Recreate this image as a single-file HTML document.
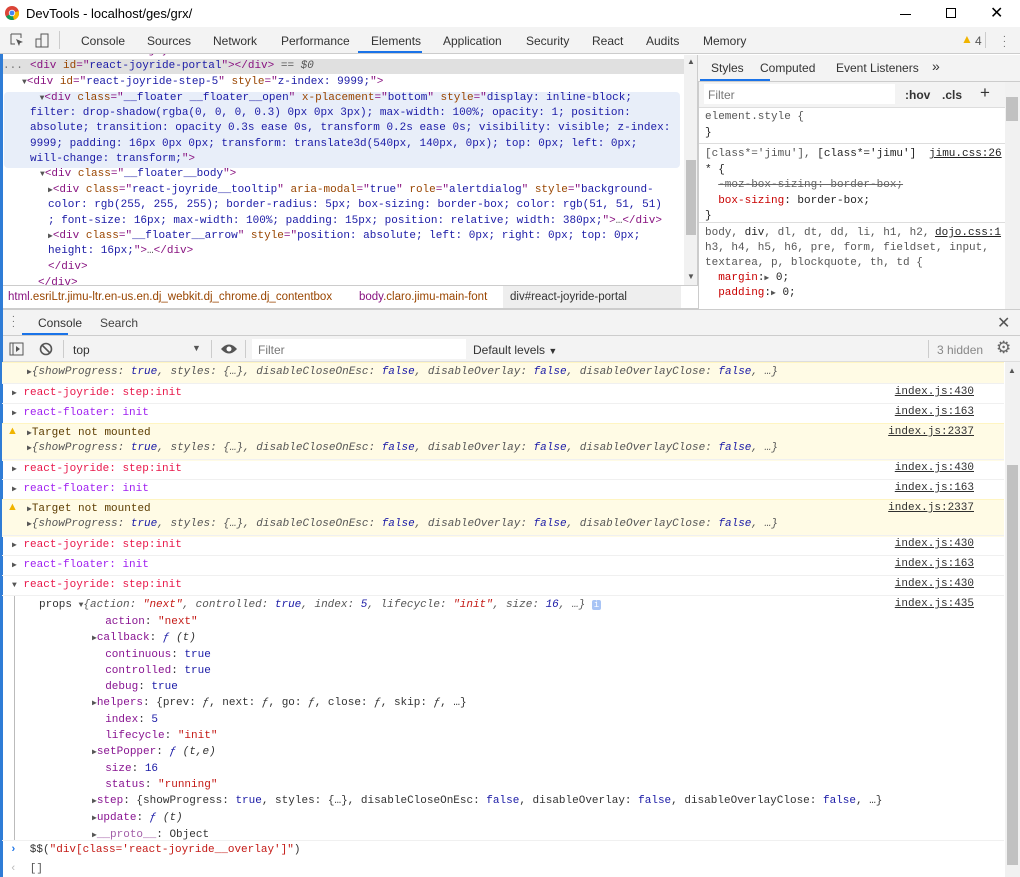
<!DOCTYPE html>
<html><head><meta charset="utf-8"><style>
*{margin:0;padding:0;box-sizing:border-box}
body{width:1020px;height:877px;overflow:hidden;background:#fff;font-family:"Liberation Sans",sans-serif;font-size:12px;color:#333;position:relative}
.abs{position:absolute}
.m{font-family:"Liberation Mono",monospace;font-size:11px;white-space:pre;position:absolute;line-height:15px}
.t{color:#881280}.a{color:#994500}.v{color:#1a1aa6}.k{color:#881391}.s{color:#c41a16}.n{color:#1a1aa6}.g{color:#565656}
.tri{font-size:8px;color:#555}
.row{position:absolute;left:2px;width:1002px;border-top:1px solid #f0f0f0;height:20px}
.warn{background:#fffbe5;border-top:1px solid #fff5c2}
.rj{color:#e8174a}.rf{color:#a020f0}
.src{position:absolute;right:46px;text-decoration:underline;color:#303030;font-family:"Liberation Mono",monospace;font-size:11px}
.it{font-style:italic}
.tab{position:absolute;top:34px;font-size:12px;color:#333}
</style></head><body>
<div class="abs" style="left:0;top:0;width:3px;height:877px;background:#2f7cd6"></div>
<!-- elements first partial line (clipped) -->
<div class="abs" style="left:3px;top:54px;width:681px;height:5px;overflow:hidden">
<div class="m" style="left:27px;top:-10px;color:#881280">&lt;div class="react-joyride"&gt;…&lt;/div&gt;</div></div>
<!-- title -->
<div class="abs" style="left:0;top:0;width:1020px;height:27px;background:#fff"></div>
<svg class="abs" style="left:5px;top:6px" width="14" height="14" viewBox="0 0 14 14"><circle cx="7" cy="7" r="7" fill="#db4437"/><path d="M7 7 L1 10.5 A7 7 0 0 0 9 13.8Z" fill="#0f9d58"/><path d="M7 7 L9 13.8 A7 7 0 0 0 13.9 5Z" fill="#f4b400"/><circle cx="7" cy="7" r="3.2" fill="#fff"/><circle cx="7" cy="7" r="2.4" fill="#4285f4"/></svg>
<div class="abs" style="left:26px;top:6px;font-size:13px;color:#000">DevTools - localhost/ges/grx/</div>
<div class="abs" style="left:900px;top:14px;width:11px;height:1px;background:#000"></div>
<div class="abs" style="left:946px;top:8px;width:10px;height:10px;border:1px solid #000"></div>
<div class="abs" style="left:990px;top:3px;font-size:16px;color:#000">✕</div>
<!-- tab bar -->
<div class="abs" style="left:0;top:27px;width:1020px;height:27px;background:#f3f3f3;border-bottom:1px solid #ccc"></div>
<svg class="abs" style="left:10px;top:33px" width="40" height="16"><path d="M1 1h10v4M1 1v10h4" stroke="#555" fill="none"/><path d="M6 6l7 3-3 1-1 3z" fill="#555"/><rect x="31" y="1" width="7" height="13" fill="none" stroke="#555"/><rect x="26" y="6" width="5" height="8" fill="none" stroke="#555"/></svg>
<div class="abs" style="left:59px;top:31px;width:1px;height:18px;background:#ccc"></div>
<div class="tab" style="left:81px">Console</div><div class="tab" style="left:147px">Sources</div><div class="tab" style="left:213px">Network</div><div class="tab" style="left:281px">Performance</div><div class="tab" style="left:371px">Elements</div><div class="tab" style="left:443px">Application</div><div class="tab" style="left:526px">Security</div><div class="tab" style="left:592px">React</div><div class="tab" style="left:646px">Audits</div><div class="tab" style="left:703px">Memory</div>
<div class="abs" style="left:358px;top:51px;width:64px;height:2px;background:#1a73e8"></div>
<div class="abs" style="left:961px;top:32px;color:#f0b400;font-size:12px">▲</div><div class="abs" style="left:975px;top:34px;color:#555">4</div>
<div class="abs" style="left:985px;top:32px;width:1px;height:16px;background:#ccc"></div>
<div class="abs" style="left:1003px;top:32px;color:#666;font-size:10px;line-height:5px">.<br>.<br>.</div>
<!-- elements -->
<div class="abs" style="left:3px;top:59px;width:681px;height:15px;background:#e0e0e0"></div>
<div class="abs" style="left:4px;top:92px;width:676px;height:76px;background:#e8eef9;border-radius:4px"></div>
<div class="m" style="left:3px;top:59px;color:#777">...</div>
<div class="m" style="left:30px;top:59px"><span class="t">&lt;div</span> <span class="a">id</span><span class="t">="</span><span class="v">react-joyride-portal</span><span class="t">"&gt;&lt;/div&gt;</span><span class="g"> == </span><span class="g it">$0</span></div>
<div class="m" style="left:22px;top:75px"><span class="tri">▼</span><span class="t">&lt;div</span> <span class="a">id</span><span class="t">="</span><span class="v">react-joyride-step-5</span><span class="t">"</span> <span class="a">style</span><span class="t">="</span><span class="v">z-index: 9999;</span><span class="t">"&gt;</span></div>
<div class="m v" style="left:30px;top:91px;line-height:15.2px"><span class="tri">  ▼</span><span class="t">&lt;div</span> <span class="a">class</span><span class="t">="</span>__floater __floater__open<span class="t">"</span> <span class="a">x-placement</span><span class="t">="</span>bottom<span class="t">"</span> <span class="a">style</span><span class="t">="</span>display: inline-block;
filter: drop-shadow(rgba(0, 0, 0, 0.3) 0px 0px 3px); max-width: 100%; opacity: 1; position:
absolute; transition: opacity 0.3s ease 0s, transform 0.2s ease 0s; visibility: visible; z-index:
9999; padding: 16px 0px 0px; transform: translate3d(540px, 140px, 0px); top: 0px; left: 0px;
will-change: transform;<span class="t">"&gt;</span></div>
<div class="m" style="left:40px;top:167px"><span class="tri">▼</span><span class="t">&lt;div</span> <span class="a">class</span><span class="t">="</span><span class="v">__floater__body</span><span class="t">"&gt;</span></div>
<div class="m v" style="left:48px;top:183px;line-height:15.3px"><span class="tri">▶</span><span class="t">&lt;div</span> <span class="a">class</span><span class="t">="</span>react-joyride__tooltip<span class="t">"</span> <span class="a">aria-modal</span><span class="t">="</span>true<span class="t">"</span> <span class="a">role</span><span class="t">="</span>alertdialog<span class="t">"</span> <span class="a">style</span><span class="t">="</span>background-
color: rgb(255, 255, 255); border-radius: 5px; box-sizing: border-box; color: rgb(51, 51, 51)
; font-size: 16px; max-width: 100%; padding: 15px; position: relative; width: 380px;<span class="t">"&gt;</span><span class="g">…</span><span class="t">&lt;/div&gt;</span>
<span class="tri">▶</span><span class="t">&lt;div</span> <span class="a">class</span><span class="t">="</span>__floater__arrow<span class="t">"</span> <span class="a">style</span><span class="t">="</span>position: absolute; left: 0px; right: 0px; top: 0px;
height: 16px;<span class="t">"&gt;</span><span class="g">…</span><span class="t">&lt;/div&gt;</span></div>
<div class="m t" style="left:48px;top:260px">&lt;/div&gt;</div>
<div class="m t" style="left:38px;top:276px">&lt;/div&gt;</div>
<div class="abs" style="left:684px;top:55px;width:14px;height:231px;background:#f1f1f1;border-right:1px solid #ccc"></div>
<div class="abs" style="left:686px;top:160px;width:10px;height:75px;background:#c1c1c1"></div>
<div class="abs" style="left:687px;top:57px;font-size:8px;color:#555">▲</div><div class="abs" style="left:687px;top:272px;font-size:8px;color:#555">▼</div>
<!-- breadcrumb -->
<div class="abs" style="left:3px;top:285px;width:695px;height:24px;background:#fff;border-top:1px solid #ccc;border-bottom:1px solid #ccc"></div>
<div class="abs" style="left:8px;top:291px;color:#994500;font-size:11.5px"><span style="color:#881280">html</span>.esriLtr.jimu-ltr.en-us.en.dj_webkit.dj_chrome.dj_contentbox</div>
<div class="abs" style="left:359px;top:291px;color:#994500;font-size:11.5px"><span style="color:#881280">body</span>.claro.jimu-main-font</div>
<div class="abs" style="left:503px;top:286px;width:178px;height:22px;background:#eee"></div>
<div class="abs" style="left:510px;top:291px;color:#333;font-size:11.5px">div#react-joyride-portal</div>
<!-- styles pane -->
<div class="abs" style="left:698px;top:55px;width:322px;height:254px;background:#fff;border-left:1px solid #ccc"></div>
<div class="abs" style="left:698px;top:55px;width:322px;height:27px;background:#f3f3f3;border-bottom:1px solid #ccc"></div>
<div class="abs" style="left:711px;top:61px">Styles</div><div class="abs" style="left:760px;top:61px">Computed</div><div class="abs" style="left:836px;top:61px">Event Listeners</div><div class="abs" style="left:932px;top:58px;font-size:14px">»</div>
<div class="abs" style="left:700px;top:79px;width:70px;height:2px;background:#1a73e8"></div>
<div class="abs" style="left:699px;top:82px;width:306px;height:26px;background:#f3f3f3;border-bottom:1px solid #ddd"></div>
<div class="abs" style="left:704px;top:84px;width:191px;height:20px;background:#fff"></div>
<div class="abs" style="left:708px;top:88px;color:#777">Filter</div>
<div class="abs" style="left:905px;top:88px;font-weight:bold;color:#333">:hov</div><div class="abs" style="left:942px;top:88px;font-weight:bold;color:#333">.cls</div><div class="abs" style="left:980px;top:83px;font-size:17px">+</div>
<div class="m g" style="left:705px;top:110px;line-height:15.5px">element.style {
<span style="color:#222">}</span></div>
<div class="abs" style="left:699px;top:143px;width:306px;height:1px;background:#ddd"></div>
<div class="m g" style="left:705px;top:147px;line-height:15.5px">[class*='jimu'], <span style="color:#222">[class*='jimu']</span>
<span style="color:#222">* {</span>
  <span style="text-decoration:line-through;color:#666">-moz-box-sizing: border-box;</span>
  <span style="color:#c80000">box-sizing</span><span style="color:#222">: border-box;</span>
<span style="color:#222">}</span></div>
<div class="m" style="left:929px;top:147px;text-decoration:underline;color:#222">jimu.css:26</div>
<div class="abs" style="left:699px;top:222px;width:306px;height:1px;background:#ddd"></div>
<div class="m g" style="left:705px;top:226px;line-height:15px">body, <span style="color:#222">div</span>, dl, dt, dd, li, h1, h2,
h3, h4, h5, h6, pre, form, fieldset, input,
textarea, p, blockquote, th, td {
  <span style="color:#c80000">margin</span><span style="color:#222">:<span class="tri">▶</span> 0;</span>
  <span style="color:#c80000">padding</span><span style="color:#222">:<span class="tri">▶</span> 0;</span></div>
<div class="m" style="left:935px;top:226px;text-decoration:underline;color:#222">dojo.css:1</div>
<div class="abs" style="left:1005px;top:82px;width:15px;height:227px;background:#f1f1f1"></div>
<div class="abs" style="left:1006px;top:97px;width:12px;height:24px;background:#c1c1c1"></div>
<!-- drawer tabs -->
<div class="abs" style="left:3px;top:309px;width:1017px;height:27px;background:#f3f3f3;border-top:1px solid #ccc;border-bottom:1px solid #ccc"></div>
<div class="abs" style="left:12px;top:312px;color:#666;font-size:10px;line-height:5px">.<br>.<br>.</div>
<div class="abs" style="left:38px;top:316px">Console</div><div class="abs" style="left:100px;top:316px;color:#444">Search</div>
<div class="abs" style="left:22px;top:333px;width:46px;height:2px;background:#1a73e8"></div>
<div class="abs" style="left:997px;top:313px;font-size:16px;color:#555">✕</div>
<!-- console toolbar -->
<div class="abs" style="left:3px;top:336px;width:1017px;height:26px;background:#f3f3f3;border-bottom:1px solid #ddd"></div>
<svg class="abs" style="left:9px;top:342px" width="50" height="14"><rect x="1" y="1" width="13" height="12" fill="none" stroke="#555"/><line x1="4" y1="1" x2="4" y2="13" stroke="#555"/><path d="M7 4l4 3-4 3z" fill="#555"/><circle cx="37" cy="7" r="5.5" fill="none" stroke="#555" stroke-width="1.6"/><line x1="33" y1="3" x2="41" y2="11" stroke="#555" stroke-width="1.6"/></svg>
<div class="abs" style="left:63px;top:340px;width:1px;height:18px;background:#ccc"></div>
<div class="abs" style="left:73px;top:343px">top</div><div class="abs" style="left:192px;top:343px;font-size:9px;color:#555">▼</div>
<div class="abs" style="left:211px;top:340px;width:1px;height:18px;background:#ccc"></div>
<svg class="abs" style="left:220px;top:343px" width="18" height="12"><path d="M1 6Q9 -3 17 6Q9 15 1 6Z" fill="#555"/><circle cx="9" cy="6" r="2.5" fill="#fff"/></svg>
<div class="abs" style="left:245px;top:340px;width:1px;height:18px;background:#ccc"></div>
<div class="abs" style="left:252px;top:339px;width:214px;height:20px;background:#fff"></div>
<div class="abs" style="left:258px;top:343px;color:#777">Filter</div>
<div class="abs" style="left:473px;top:343px;color:#333">Default levels <span style="font-size:9px">▼</span></div>
<div class="abs" style="left:928px;top:340px;width:1px;height:18px;background:#ccc"></div>
<div class="abs" style="left:937px;top:343px;color:#888">3 hidden</div>
<div class="abs" style="left:996px;top:338px;font-size:17px;color:#666">⚙</div>
<!-- console scrollbar -->
<div class="abs" style="left:1005px;top:362px;width:15px;height:515px;background:#f1f1f1"></div>
<div class="abs" style="left:1007px;top:465px;width:11px;height:400px;background:#c1c1c1"></div>
<div class="abs" style="left:1008px;top:366px;font-size:8px;color:#555">▲</div>
<!-- console rows -->
<div class="row warn" style="top:362px;height:21px"></div>
<div class="m it g" style="left:27px;top:365px"><span class="tri" style="font-style:normal">▶</span>{showProgress: <span class="n">true</span>, styles: {…}, disableCloseOnEsc: <span class="n">false</span>, disableOverlay: <span class="n">false</span>, disableOverlayClose: <span class="n">false</span>, …}</div>
<div class="row" style="top:383px"></div><div class="m" style="left:12px;top:386px"><span class="tri">▶</span> <span class="rj">react-joyride: step:init</span></div><div class="src" style="top:386px">index.js:430</div>
<div class="row" style="top:403px"></div><div class="m" style="left:12px;top:406px"><span class="tri">▶</span> <span class="rf">react-floater: init</span></div><div class="src" style="top:406px">index.js:163</div>
<div class="row warn" style="top:423px;height:38px"></div>
<div class="abs" style="left:7px;top:425px;color:#f0b400;font-size:11px">▲</div>
<div class="m" style="left:27px;top:426px;color:#5c3c00"><span class="tri">▶</span>Target not mounted</div><div class="src" style="top:426px">index.js:2337</div>
<div class="m it g" style="left:27px;top:441px"><span class="tri" style="font-style:normal">▶</span>{showProgress: <span class="n">true</span>, styles: {…}, disableCloseOnEsc: <span class="n">false</span>, disableOverlay: <span class="n">false</span>, disableOverlayClose: <span class="n">false</span>, …}</div>
<div class="row" style="top:459px"></div><div class="m" style="left:12px;top:462px"><span class="tri">▶</span> <span class="rj">react-joyride: step:init</span></div><div class="src" style="top:462px">index.js:430</div>
<div class="row" style="top:479px"></div><div class="m" style="left:12px;top:482px"><span class="tri">▶</span> <span class="rf">react-floater: init</span></div><div class="src" style="top:482px">index.js:163</div>
<div class="row warn" style="top:499px;height:38px"></div>
<div class="abs" style="left:7px;top:501px;color:#f0b400;font-size:11px">▲</div>
<div class="m" style="left:27px;top:502px;color:#5c3c00"><span class="tri">▶</span>Target not mounted</div><div class="src" style="top:502px">index.js:2337</div>
<div class="m it g" style="left:27px;top:517px"><span class="tri" style="font-style:normal">▶</span>{showProgress: <span class="n">true</span>, styles: {…}, disableCloseOnEsc: <span class="n">false</span>, disableOverlay: <span class="n">false</span>, disableOverlayClose: <span class="n">false</span>, …}</div>
<div class="row" style="top:535px"></div><div class="m" style="left:12px;top:538px"><span class="tri">▶</span> <span class="rj">react-joyride: step:init</span></div><div class="src" style="top:538px">index.js:430</div>
<div class="row" style="top:555px"></div><div class="m" style="left:12px;top:558px"><span class="tri">▶</span> <span class="rf">react-floater: init</span></div><div class="src" style="top:558px">index.js:163</div>
<div class="row" style="top:575px"></div><div class="m" style="left:12px;top:578px"><span class="tri">▼</span> <span class="rj">react-joyride: step:init</span></div><div class="src" style="top:578px">index.js:430</div>
<div class="row" style="top:595px;height:245px"></div>
<div class="abs" style="left:14px;top:596px;width:1px;height:244px;background:#bbb"></div>
<div class="m" style="left:39px;top:598px;color:#333">props <span class="tri">▼</span><span class="it g">{action: <span class="s">"next"</span>, controlled: <span class="n">true</span>, index: <span class="n">5</span>, lifecycle: <span class="s">"init"</span>, size: <span class="n">16</span>, …}</span> <span style="background:#a8c4f5;color:#fff;border-radius:2px;font-size:9px;padding:0 2px">i</span></div>
<div class="src" style="top:598px">index.js:435</div>
<div class="m" style="left:92px;top:614px;line-height:16px"><span class="k">  action</span>: <span class="s">"next"</span>
<span class="tri">▶</span><span class="k">callback</span>: <span class="n it">ƒ</span> <span class="it">(t)</span>
<span class="k">  continuous</span>: <span class="n">true</span>
<span class="k">  controlled</span>: <span class="n">true</span>
<span class="k">  debug</span>: <span class="n">true</span>
<span class="tri">▶</span><span class="k">helpers</span>: {prev: <span class="it">ƒ</span>, next: <span class="it">ƒ</span>, go: <span class="it">ƒ</span>, close: <span class="it">ƒ</span>, skip: <span class="it">ƒ</span>, …}
<span class="k">  index</span>: <span class="n">5</span>
<span class="k">  lifecycle</span>: <span class="s">"init"</span>
<span class="tri">▶</span><span class="k">setPopper</span>: <span class="n it">ƒ</span> <span class="it">(t,e)</span>
<span class="k">  size</span>: <span class="n">16</span>
<span class="k">  status</span>: <span class="s">"running"</span>
<span class="tri">▶</span><span class="k">step</span>: {showProgress: <span class="n">true</span>, styles: {…}, disableCloseOnEsc: <span class="n">false</span>, disableOverlay: <span class="n">false</span>, disableOverlayClose: <span class="n">false</span>, …}
<span class="tri">▶</span><span class="k">update</span>: <span class="n it">ƒ</span> <span class="it">(t)</span>
<span class="tri">▶</span><span class="k" style="color:#a35fa8">__proto__</span>: Object</div>
<div class="row" style="top:840px;height:37px"></div>
<div class="m" style="left:10px;top:843px"><span style="color:#1a73e8;font-weight:bold">›</span>  $$(<span class="s">"div[class='react-joyride__overlay']"</span>)</div>
<div class="m" style="left:10px;top:862px;color:#555"><span style="color:#bbb">‹</span>  []</div>
</body></html>
